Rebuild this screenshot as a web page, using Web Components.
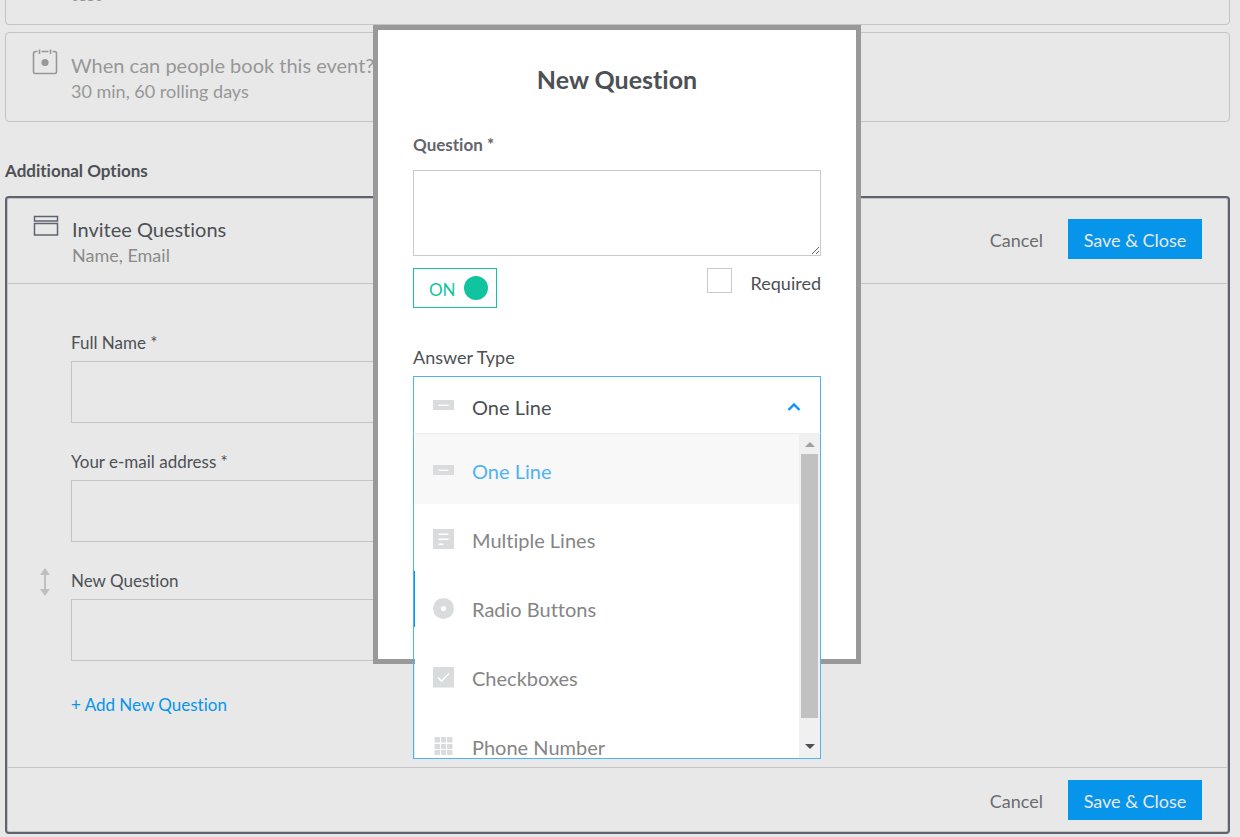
<!DOCTYPE html>
<html lang="en">
<head>
<meta charset="utf-8">
<meta name="viewport" content="width=device-width, initial-scale=1">
<title>Invitee Questions</title>
<style>
  :root {
    --page: #e8e8e8;
    --line: #c4c4c4;
    --frame: #5f636f;
    --text: #4d5055;
    --muted: #979797;
    --primary: #0695eb;
    --accent: #4fb2f3;
    --green: #10c4a0;
  }

  body {
    margin: 0;
    background: var(--page);
    color: var(--text);
    font-family: Lato, "Open Sans", sans-serif;
    font-size: 17px;
    font-variant-ligatures: none;
    line-height: 20px;
  }
</style>
</head>
<body>
<event-page></event-page>

<script>
const icons = {
  calendar: `<svg width="26" height="26" viewBox="0 0 26 26" fill="none" stroke="#979797" stroke-width="1.6">
    <path d="M5.500 2.500H3.500a2 2 0 0 0-2 2v18.500a1.500 1.500 0 0 0 1.500 1.500h20a1.500 1.500 0 0 0 1.500-1.500V4.500a2 2 0 0 0-2-2h-2M9.500 2.500h7"/>
    <path d="M7.500 .5v4.500M18.500 .5v4.500"/>
    <circle cx="13" cy="13.500" r="3.600" fill="#979797" stroke="none"/>
  </svg>`,
  form: `<svg width="26" height="26" viewBox="0 0 26 26" fill="none" stroke="#5f636f" stroke-width="1.500">
    <path d="M1.500 3.500h23v4.500h-23zM1.500 10.500h23v11.500h-23z"/>
  </svg>`,
  drag: `<svg width="12" height="28" viewBox="0 0 12 28" fill="#bfbfbf">
    <path d="M6 0l5 7H7v14h4l-5 7-5-7h4V7H1z"/>
  </svg>`,
  line: `<svg width="21" height="21" viewBox="0 0 21 21">
    <path fill="#d8dcdd" d="M0 5h21v10H0z"/>
    <path stroke="#fff" stroke-width="1.400" d="M5.500 10.300h10"/>
  </svg>`,
  lines: `<svg width="21" height="21" viewBox="0 0 21 21">
    <path fill="#d8dcdd" d="M0 0h21v20H0z"/>
    <path stroke="#fff" stroke-width="1.400" d="M5.500 5.200h10M5.500 10.200h10M5.500 15.200h5"/>
  </svg>`,
  radio: `<svg width="21" height="21" viewBox="0 0 21 21">
    <circle cx="10.500" cy="10.500" r="10.500" fill="#d8dcdd"/>
    <circle cx="10.500" cy="10.500" r="2.600" fill="#fff"/>
  </svg>`,
  check: `<svg width="21" height="21" viewBox="0 0 21 21">
    <path fill="#d8dcdd" d="M0 0h21v20.500H0z"/>
    <path fill="none" stroke="#fff" stroke-width="1.600" d="M5 10.500l3.500 3.500 7.500-7.500"/>
  </svg>`,
  phone: `<svg width="21" height="21" viewBox="0 0 21 21" fill="#d8dcdd">
    <path d="M1.500 1h5.500v5.500h-5.500zM8 1h5v5.500H8zM14 1h5.500v5.500H14zM1.500 8h5.500v5h-5.500zM8 8h5v5H8zM14 8h5.500v5H14zM1.500 14h5.500v5h-5.500zM8 14h5v5H8zM14 14h5.500v5H14z"/>
  </svg>`
};

class EventCard extends HTMLElement {
  static get styles() {
    return /* css */`
      :host {
        display: flex;
        border: 1px solid var(--line);
        border-radius: 4px;
        padding: 21px 26px 20px;
        color: var(--muted);
      }

      .icon {
        flex: 0 0 39px;
        height: 26px;
        margin-top: -5px;
      }

      .title {
        font-size: 20px;
        line-height: 22px;
        margin-bottom: 5px;
      }

      .summary {
        font-size: 18px;
      }
    `;
  }

  connectedCallback() {
    this.attachShadow({ mode: "open" }).innerHTML = /* html */`
      <style>${EventCard.styles}</style>
      <div class="icon">${icons[this.getAttribute("icon")] || ""}</div>
      <div class="text">
        <div class="title"><slot name="title">&nbsp;</slot></div>
        <div class="summary"><slot></slot></div>
      </div>`;
  }
}

class FormActions extends HTMLElement {
  static get styles() {
    return /* css */`
      :host {
        display: flex;
        justify-content: flex-end;
        gap: 9px;
      }

      button {
        height: 40px;
        border: 0;
        padding: 2px 16px 0;
        background: none;
        color: #6a6c70;
        font: inherit;
        font-size: 18px;
        cursor: pointer;
      }

      .save {
        min-width: 134px;
        padding: 2px 8px 0;
        background: var(--primary);
        color: #e8e8e8;
      }
    `;
  }

  connectedCallback() {
    this.attachShadow({ mode: "open" }).innerHTML = /* html */`
      <style>${FormActions.styles}</style>
      <button type="button">Cancel</button>
      <button type="button" class="save">Save &amp; Close</button>`;
  }
}

class QuestionField extends HTMLElement {
  static get styles() {
    return /* css */`
      :host {
        display: grid;
        grid-template-columns: 64px minmax(0, 620px);
        row-gap: 8px;
      }

      .handle {
        display: grid;
        justify-content: center;
        padding-left: 12px;
        height: 20px;
        margin-top: -3px;
      }

      input {
        grid-column: 2;
        height: 62px;
        box-sizing: border-box;
        border: 1px solid var(--line);
        padding: 0 16px;
        background: none;
        font: inherit;
      }
    `;
  }

  connectedCallback() {
    this.attachShadow({ mode: "open" }).innerHTML = /* html */`
      <style>${QuestionField.styles}</style>
      <div class="handle">${this.hasAttribute("draggable") ? icons.drag : ""}</div>
      <label for="answer"><slot></slot></label>
      <input id="answer" type="text">`;
  }
}

class OptionsPanel extends HTMLElement {
  static get styles() {
    return /* css */`
      :host {
        display: block;
        border: 2px solid var(--frame);
        border-radius: 4px;
        box-shadow: inset 0 0 0 1px var(--line);
      }

      header {
        display: flex;
        padding: 20px 26px 18px;
        border-bottom: 1px solid var(--line);
      }

      .icon {
        flex: 0 0 39px;
        height: 26px;
        margin-top: -5px;
      }

      h3 {
        margin: 0 0 5px;
        font-size: 20px;
        font-weight: 400;
        line-height: 22px;
      }

      .summary {
        color: #8b8b8b;
        font-size: 18px;
      }

      header form-actions {
        margin: 1px 0 0 auto;
        align-self: flex-start;
      }

      .fields {
        display: grid;
        gap: 29px;
        padding: 49px 26px 52px 0;
      }

      .add {
        justify-self: start;
        margin: 5px 0 0 64px;
        color: var(--primary);
        text-decoration: none;
      }

      footer {
        padding: 12px 26px;
        border-top: 1px solid var(--line);
      }
    `;
  }

  connectedCallback() {
    this.attachShadow({ mode: "open" }).innerHTML = /* html */`
      <style>${OptionsPanel.styles}</style>
      <header>
        <div class="icon">${icons.form}</div>
        <div>
          <h3>Invitee Questions</h3>
          <div class="summary">Name, Email</div>
        </div>
        <form-actions></form-actions>
      </header>
      <div class="fields">
        <slot></slot>
        <a class="add" href="#new">+ Add New Question</a>
      </div>
      <footer><form-actions></form-actions></footer>`;
  }
}

class AnswerSelect extends HTMLElement {
  static get styles() {
    return /* css */`
      :host {
        display: block;
        position: relative;
        font-size: 20px;
        line-height: 24px;
      }

      label {
        display: block;
        margin-bottom: 9px;
        font-size: 18px;
        line-height: 20px;
      }

      .current {
        display: grid;
        grid-template-columns: 1fr;
        align-items: center;
        height: 58px;
        box-sizing: border-box;
        border: 1px solid var(--accent);
        border-bottom-color: #eee;
      }

      .current > * {
        grid-area: 1 / 1;
      }

      .current svg {
        pointer-events: none;
        margin-left: 19px;
      }

      .current .arrow {
        justify-self: end;
        margin-right: 19px;
      }

      select {
        appearance: none;
        width: 100%;
        height: 56px;
        border: 0;
        padding: 4px 40px 0 58px;
        background: none;
        color: var(--text);
        font: inherit;
      }

      /* open menu, hangs over the dialog's lower edge */
      .menu {
        position: absolute;
        top: 100%;
        left: 0;
        right: 0;
        height: 325px;
        box-sizing: border-box;
        display: flex;
        border: 1px solid var(--accent);
        border-top: 0;
        padding-left: 1px;
      }

      ul {
        flex: 1;
        margin: 0;
        border-top: 1px solid #f8f8f8;
        padding: 0;
        overflow: hidden;
        background: #fff;
        list-style: none;
        color: #858585;
      }

      li {
        display: flex;
        align-items: center;
        gap: 18px;
        height: 69px;
        padding-left: 18px;
      }

      li svg {
        margin-top: 2px;
      }

      li span {
        padding-top: 3px;
      }

      li[aria-selected="true"] {
        background: #f8f8f8;
        color: var(--accent);
      }

      .scroll {
        display: flex;
        flex-direction: column;
        align-items: center;
        width: 21px;
        background: #f0f0f0;
      }

      .thumb {
        flex: 1;
        width: 17px;
        margin-bottom: 20px;
        background: #c1c1c1;
      }
    `;
  }

  connectedCallback() {
    const options = [
      ["line", "One Line"],
      ["lines", "Multiple Lines"],
      ["radio", "Radio Buttons"],
      ["check", "Checkboxes"],
      ["phone", "Phone Number"]
    ];
    const items = options.map(([icon, text], i) =>
      `<li role="option" aria-selected="${i === 0}">${icons[icon]}<span>${text}</span></li>`);

    this.attachShadow({ mode: "open" }).innerHTML = /* html */`
      <style>${AnswerSelect.styles}</style>
      <label for="type">Answer Type</label>
      <div class="current">
        ${icons.line}
        <select id="type"><option>One Line</option></select>
        <svg class="arrow" width="14" height="14" viewBox="0 0 14 14" fill="none" stroke="#0695ff" stroke-width="2.400">
          <path d="M1.500 12L7 6.500l5.500 5.500"/>
        </svg>
      </div>
      <div class="menu">
        <ul role="listbox">${items.join("")}</ul>
        <div class="scroll">
          <svg width="10" height="20" viewBox="0 0 10 20"><path fill="#a0a0a0" d="M0 13h10L5 8z"/></svg>
          <div class="thumb"></div>
          <svg width="10" height="20" viewBox="0 0 10 20"><path fill="#4d4f56" d="M0 6h10l-5 5z"/></svg>
        </div>
      </div>`;
  }
}

class QuestionDialog extends HTMLElement {
  static get styles() {
    return /* css */`
      :host {
        position: absolute;
        inset: 0;
        padding: 25px 11px 25px 5px;
      }

      form {
        width: min(488px, 100%);
        box-sizing: border-box;
        margin: 0 auto;
        border: 5px solid #999;
        padding: 33px 35px 32px;
        background: #fff;
      }

      h2 {
        margin: 0 0 40px;
        font-size: 25px;
        line-height: 32px;
        text-align: center;
      }

      .question {
        display: block;
        margin-bottom: 15px;
        color: #62656e;
        font-weight: 700;
      }

      textarea {
        display: block;
        width: 100%;
        height: 86px;
        box-sizing: border-box;
        border: 1px solid #cacaca;
        padding: 12px;
        font: inherit;
      }

      .row {
        display: flex;
        justify-content: space-between;
        align-items: flex-start;
        margin: 12px 0 39px;
      }

      .switch {
        display: flex;
        align-items: center;
        gap: 8px;
        width: 84px;
        height: 40px;
        border: 1px solid var(--green);
        padding: 0 8px 0 15px;
        background: none;
        color: var(--green);
        font: inherit;
      }

      .switch span {
        padding-top: 4px;
      }

      .switch i {
        width: 24px;
        height: 24px;
        margin-left: auto;
        border-radius: 50%;
        background: var(--green);
      }

      .required {
        display: flex;
        gap: 19px;
        font-size: 18px;
        line-height: 30px;
      }

      .required input {
        appearance: none;
        width: 25px;
        height: 25px;
        margin: 0;
        border: 1px solid #cacaca;
      }

      .apply {
        display: block;
        width: 100%;
        height: 56px;
        margin-top: 137px;
        border: 0;
        background: #0695ff;
      }

      /* keeps the menu above the apply button */
      answer-select {
        z-index: 1;
      }
    `;
  }

  connectedCallback() {
    this.attachShadow({ mode: "open" }).innerHTML = /* html */`
      <style>${QuestionDialog.styles}</style>
      <form>
        <h2>New Question</h2>
        <label class="question" for="question">Question *</label>
        <textarea id="question"></textarea>
        <div class="row">
          <button class="switch" type="button" role="switch" aria-checked="true"><span>ON</span><i></i></button>
          <label class="required"><input type="checkbox">Required</label>
        </div>
        <answer-select></answer-select>
        <button class="apply" type="submit"></button>
      </form>`;
  }
}

class EventPage extends HTMLElement {
  static get styles() {
    return /* css */`
      :host {
        display: block;
        position: relative;
        overflow: hidden;
      }

      /* scrolled part way down the list of cards */
      main {
        margin-top: -65px;
        padding: 0 10px 3px 5px;
      }

      event-card + event-card {
        margin-top: 7px;
      }

      h2 {
        margin: 37px 0 13px;
        font-size: 17px;
        line-height: 24px;
      }
    `;
  }

  connectedCallback() {
    this.attachShadow({ mode: "open" }).innerHTML = /* html */`
      <style>${EventPage.styles}</style>
      <main>
        <event-card>test</event-card>
        <event-card icon="calendar">
          <span slot="title">When can people book this event?</span>
          30 min, 60 rolling days
        </event-card>
        <h2>Additional Options</h2>
        <options-panel>
          <question-field>Full Name *</question-field>
          <question-field>Your e-mail address *</question-field>
          <question-field draggable="true">New Question</question-field>
        </options-panel>
      </main>
      <question-dialog></question-dialog>`;
  }
}

customElements.define("event-card", EventCard);
customElements.define("form-actions", FormActions);
customElements.define("question-field", QuestionField);
customElements.define("options-panel", OptionsPanel);
customElements.define("answer-select", AnswerSelect);
customElements.define("question-dialog", QuestionDialog);
customElements.define("event-page", EventPage);
</script>
</body>
</html>
